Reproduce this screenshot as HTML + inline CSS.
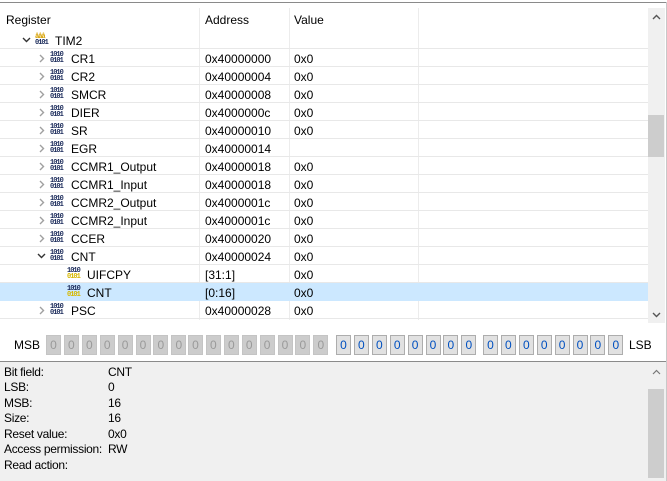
<!DOCTYPE html>
<html><head><meta charset="utf-8"><style>
*{margin:0;padding:0;box-sizing:border-box}
body{width:667px;height:481px;background:#fff;font-family:"Liberation Sans",sans-serif;font-size:12px;color:#000;position:relative;overflow:hidden}
.abs{position:absolute}
.row{position:absolute;left:0;width:648px;height:18px;border-bottom:1px solid #e8e8e8}
.row span{position:absolute;top:3px;white-space:nowrap}
.vl{position:absolute;top:8px;width:1px;height:314px;background:#ececec}
.row span.ic{top:3px;font:bold 7px/6px "Liberation Mono",monospace;color:#1a2a5a;letter-spacing:-1px}
.row svg{position:absolute;top:5px}
.box{position:absolute;top:335px;width:15px;height:20px;border:1px solid #adadad;background:#e1e1e1;text-align:center;line-height:18px;font-size:12px}
.g{background:#cccccc;color:#9a9a9a;border-color:#c4c4c4}
.b{color:#0050c0}
.info span{position:absolute;letter-spacing:-0.3px}
</style></head><body>
<div class="abs" style="left:0;top:2px;width:667px;height:1px;background:#8a8a8a"></div>
<div class="abs" style="left:666px;top:2px;width:1px;height:479px;background:#c8c8c8"></div>
<div class="abs" style="left:6px;top:13px">Register</div>
<div class="abs" style="left:205px;top:13px">Address</div>
<div class="abs" style="left:294px;top:13px">Value</div>
<div class="vl" style="left:199px"></div><div class="vl" style="left:289px"></div><div class="vl" style="left:418px"></div>

<div class="row" style="top:31px"><svg style="left:22px" width="9" height="8"><polyline points="1,2 4.5,5.5 8,2" fill="none" stroke="#333" stroke-width="1.4"/></svg><span class="ic" style="left:35px"><b style="color:#d6a000">ååå</b><br>0101</span><span style="left:55px">TIM2</span></div>

<div id="rows"></div>
<div class="row" style="top:265px"><span class="ic" style="left:67px">1010<br><b style="color:#d6b800">0101</b></span><span style="left:87px">UIFCPY</span><span style="left:205px">[31:1]</span><span style="left:294px">0x0</span></div>
<div class="row" style="top:283px;background:#cce8ff;border-bottom-color:#cce8ff"><span class="ic" style="left:67px">1010<br><b style="color:#d6b800">0101</b></span><span style="left:87px">CNT</span><span style="left:205px">[0:16]</span><span style="left:294px">0x0</span></div>
<script>
var R=[["CR1","0x40000000","0x0"],["CR2","0x40000004","0x0"],["SMCR","0x40000008","0x0"],["DIER","0x4000000c","0x0"],["SR","0x40000010","0x0"],["EGR","0x40000014",""],["CCMR1_Output","0x40000018","0x0"],["CCMR1_Input","0x40000018","0x0"],["CCMR2_Output","0x4000001c","0x0"],["CCMR2_Input","0x4000001c","0x0"],["CCER","0x40000020","0x0"],["CNT","0x40000024","0x0",1],["PSC","0x40000028","0x0",0,14]];
var h='';
for(var i=0;i<R.length;i++){var r=R[i];var t=R[i][4]!==undefined?301:49+i*18;
var chev=r[3]?'<svg style="left:37px" width="9" height="8"><polyline points="1,2 4.5,5.5 8,2" fill="none" stroke="#333" stroke-width="1.4"/></svg>':'<svg style="left:38px;top:5px" width="8" height="9"><polyline points="2,1 5.5,4.5 2,8" fill="none" stroke="#a0a0a0" stroke-width="1.4"/></svg>';
h+='<div class="row" style="top:'+t+'px">'+chev+'<span class="ic" style="left:50px">1010<br>0101</span><span style="left:71px">'+r[0]+'</span><span style="left:205px">'+r[1]+'</span><span style="left:294px">'+r[2]+'</span></div>';}
document.getElementById('rows').innerHTML=h;
</script>
<div class="abs" style="left:0;top:320px;width:648px;height:4px;background:#fff"></div>

<div class="abs" style="left:648px;top:8px;width:17px;height:315px;background:#f0f0f0"></div>
<div class="abs" style="left:648px;top:115px;width:16px;height:42px;background:#cdcdcd"></div>
<svg class="abs" style="left:652px;top:14px" width="9" height="6"><polyline points="1,5 4.5,1.5 8,5" fill="none" stroke="#555" stroke-width="1.4"/></svg>
<svg class="abs" style="left:652px;top:312px" width="9" height="6"><polyline points="1,1 4.5,4.5 8,1" fill="none" stroke="#555" stroke-width="1.4"/></svg>

<div class="abs" style="left:14px;top:338px">MSB</div>
<div class="abs" style="left:629px;top:338px">LSB</div>
<div id="bits"></div>
<script>
var h='',s=[46,188,336,483];
for(var g=0;g<4;g++)for(var i=0;i<8;i++){h+='<div class="box '+(g<2?'g':'b')+'" style="left:'+(s[g]+i*17.9)+'px">0</div>';}
document.getElementById('bits').innerHTML=h;
</script>

<div class="abs" style="left:0;top:361px;width:666px;height:120px;background:#f0f0f0;border-top:1px solid #8a8a8a"></div>
<div class="abs" style="left:648px;top:362px;width:17px;height:119px;background:#f0f0f0"></div>
<div class="abs" style="left:648px;top:389px;width:16px;height:89px;background:#cdcdcd"></div>
<svg class="abs" style="left:652px;top:369px" width="9" height="6"><polyline points="1,5 4.5,1.5 8,5" fill="none" stroke="#777" stroke-width="1.2"/></svg>
<div class="info">
<span style="left:4px;top:365px">Bit field:</span><span style="left:108px;top:365px">CNT</span>
<span style="left:4px;top:380px">LSB:</span><span style="left:108px;top:380px">0</span>
<span style="left:4px;top:396px">MSB:</span><span style="left:108px;top:396px">16</span>
<span style="left:4px;top:411px">Size:</span><span style="left:108px;top:411px">16</span>
<span style="left:4px;top:427px">Reset value:</span><span style="left:108px;top:427px">0x0</span>
<span style="left:4px;top:442px">Access permission:</span><span style="left:108px;top:442px">RW</span>
<span style="left:4px;top:458px">Read action:</span>
</div>
</body></html>
